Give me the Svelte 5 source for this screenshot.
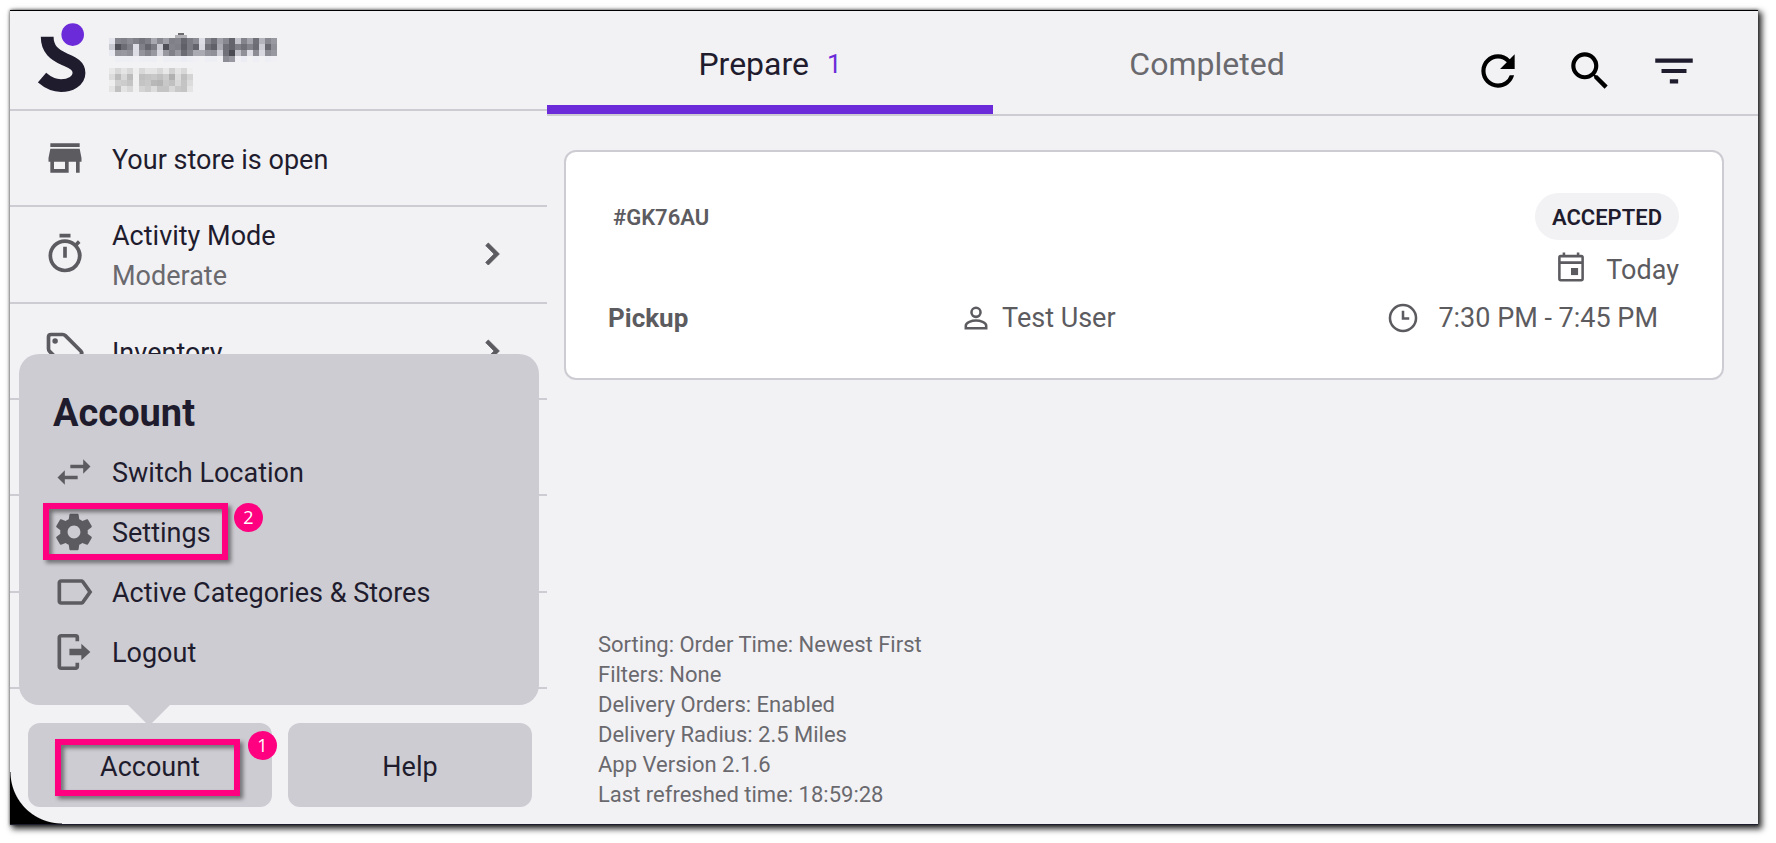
<script>
  const paths = {
    store: 'M20 4H4v2h16V4zm1 10v-2l-1-5H4l-1 5v2h1v6h10v-6h4v6h2v-6h1zm-9 4H6v-4h6v4z',
    timer:
      'M15 1H9v2h6V1zm-4 13h2V8h-2v6zm8.03-6.61l1.42-1.42c-.43-.51-.9-.99-1.41-1.41l-1.42 1.42A8.962 8.962 0 0 0 12 4c-4.97 0-9 4.03-9 9s4.02 9 9 9a8.994 8.994 0 0 0 7.03-14.61zM12 20c-3.87 0-7-3.13-7-7s3.13-7 7-7 7 3.13 7 7-3.13 7-7 7z',
    chevron: 'M10 6L8.59 7.41 13.17 12l-4.58 4.59L10 18l6-6z',
    swap: 'M6.99 11L3 15l3.99 4v-3H14v-2H6.99v-3zM21 9l-3.99-4v3H10v2h7.01v3L21 9z',
    gear: 'M19.43 12.98c.04-.32.07-.64.07-.98s-.03-.66-.07-.98l2.11-1.65c.19-.15.24-.42.12-.64l-2-3.46c-.12-.22-.39-.3-.61-.22l-2.49 1c-.52-.4-1.08-.73-1.69-.98l-.38-2.65A.488.488 0 0 0 14 2h-4c-.25 0-.46.18-.49.42l-.38 2.65c-.61.25-1.17.59-1.69.98l-2.49-1c-.23-.09-.49 0-.61.22l-2 3.46c-.13.22-.07.49.12.64l2.11 1.65c-.04.32-.07.65-.07.98s.03.66.07.98l-2.11 1.65c-.19.15-.24.42-.12.64l2 3.46c.12.22.39.3.61.22l2.49-1c.52.4 1.08.73 1.69.98l.38 2.65c.03.24.24.42.49.42h4c.25 0 .46-.18.49-.42l.38-2.65c.61-.25 1.17-.59 1.69-.98l2.49 1c.23.09.49 0 .61-.22l2-3.46c.12-.22.07-.49-.12-.64l-2.11-1.65zM12 15.5c-1.93 0-3.5-1.57-3.5-3.5s1.57-3.5 3.5-3.5 3.5 1.57 3.5 3.5-1.57 3.5-3.5 3.5z',
    label:
      'M17.63 5.84C17.27 5.33 16.67 5 16 5L5 5.01C3.9 5.01 3 5.9 3 7v10c0 1.1.9 1.99 2 1.99L16 19c.67 0 1.27-.33 1.63-.84L22 12l-4.37-6.16zM16 17H5V7h11l3.55 5L16 17z',
    logout:
      'M5 2.2h8c1 0 1.8.7 1.8 1.7v2.3h-2V4.1H5v15.8h7.8v-2.1h2v2.3c0 1-.8 1.7-1.8 1.7H5c-1.1 0-2-.8-2-1.8V4c0-1 .9-1.8 2-1.8zM9.5 10.2H16V7.5l4.9 4.5-4.9 4.5v-2.7H9.5z',
    refresh:
      'M17.65 6.35A7.958 7.958 0 0 0 12 4c-4.42 0-7.99 3.58-7.99 8s3.57 8 7.99 8c3.73 0 6.84-2.55 7.73-6h-2.08A5.99 5.99 0 0 1 12 18c-3.31 0-6-2.69-6-6s2.69-6 6-6c1.66 0 3.14.69 4.22 1.78L13 11h7V4l-2.35 2.35z',
    search:
      'M15.5 14h-.79l-.28-.27A6.471 6.471 0 0 0 16 9.5 6.5 6.5 0 1 0 9.5 16c1.61 0 3.09-.59 4.23-1.57l.27.28v.79l5 4.99L20.49 19l-4.99-5zm-6 0C7.01 14 5 11.99 5 9.5S7.01 5 9.5 5 14 7.01 14 9.5 11.99 14 9.5 14z',
    filter: 'M10 18h4v-2h-4v2zM3 6v2h18V6H3zm3 7h12v-2H6v2z'
  };

  const menuItems = [
    { icon: 'swap', text: 'Switch Location' },
    { icon: 'gear', text: 'Settings', step: 2 },
    { icon: 'label', text: 'Active Categories & Stores' },
    { icon: 'logout', text: 'Logout' }
  ];

  const info = [
    'Sorting: Order Time: Newest First',
    'Filters: None',
    'Delivery Orders: Enabled',
    'Delivery Radius: 2.5 Miles',
    'App Version 2.1.6',
    'Last refreshed time: 18:59:28'
  ];

  // Redacted store name and code: one hex grey level per 6px cell, by row.
  const mosaic = [
    { y: 5, row: 'e4 85 80 8c 80 74 80 a8 88 a0 80 84 66 7c 8c dd 88 70 a0 88 64 c4 84 a4 70 b4 88 98' },
    { y: 11, row: 'c8 50 6c 80 dd 80 66 7c cc 50 84 80 60 7c 64 d8 70 60 aa 70 64 80 70 84 6c cc 68 90' },
    { y: 17, row: 'e8 94 98 90 dd 94 84 98 d8 98 80 98 6c 84 aa aa 94 90 cc 70 4a c0 90 dd 8c d8 8c 98' },
    { y: 23, row: 'f2 ee ee ee f0 ee ee ee f2 ee ee ee ec ee f0 f2 ee ee f2 8c 98 f0 ec f2 ee f2 ee f0' },
    { y: 35, row: 'e8 d8 e4 d8 ee d8 e4 e4 d8 e8 d0 e4 d8 f0' },
    { y: 41, row: 'dc bc d8 bc f0 c0 c4 c8 c0 cc b0 dc c0 d4' },
    { y: 47, row: 'ee d0 cc c4 f0 c4 c8 b8 b4 c8 c0 d8 c4 dc' },
    { y: 53, row: 'e4 c0 e4 d8 f0 d4 cc dc c4 c4 d8 c8 c4 e4' }
  ];
  const cells = mosaic.flatMap(({ y, row }) =>
    row.split(' ').map((hex, i) => {
      const v = parseInt(hex, 16);
      const blue = y < 30 ? Math.min(v + 8, 245) : v;
      return { x: i * 6, y, fill: `rgb(${v},${v},${blue})` };
    })
  );
</script>

{#snippet icon(name, size)}
  <svg class="icon {size}" viewBox="0 0 24 24" aria-hidden="true"><path d={paths[name]} /></svg>
{/snippet}

<div class="frame">
  <div class="app">
    <aside>
      <header class="brand">
        <svg class="logo" viewBox="38 23 48 70" aria-hidden="true">
          <circle cx="72.7" cy="34.6" r="11.3" fill="#6c2bd9" />
          <path
            d="M47.2 36.8C47.2 49.5 54.5 54.5 64 59C71.5 62.5 79 65 79 73C79 81 70 85.6 61 85.6C53.5 85.6 47.5 82.3 42 77.6"
            fill="none"
            stroke="#1f1c2e"
            stroke-width="12.8"
          />
        </svg>
        <svg class="mosaic" viewBox="0 0 168 60" shape-rendering="crispEdges" aria-hidden="true">
          {#each cells as c}
            <rect x={c.x} y={c.y} width="6" height="6" fill={c.fill} />
          {/each}
          <path d="M66 2h12v3H66z" fill="#b4b4b8" />
          <path d="M69 0h6v2h-6z" fill="#6c6c70" />
        </svg>
      </header>

      <ul class="rows">
        <li>
          {@render icon('store', 'md')}
          <span class="label">Your store is open</span>
        </li>
        <li>
          {@render icon('timer', 'md')}
          <span class="label">Activity Mode<small>Moderate</small></span>
          {@render icon('chevron', 'md bold')}
        </li>
        <li>
          <svg class="icon md" viewBox="0 0 24 24" aria-hidden="true">
            <path
              class="line"
              d="M4.4 3H10.8C11.4 3 11.8 3.2 12.2 3.6L20.6 12C21.3 12.7 21.3 13.5 20.6 14.2L14.2 20.6C13.5 21.3 12.7 21.3 12 20.6L3.6 12.2C3.2 11.8 3 11.4 3 10.8V4.4C3 3.5 3.5 3 4.4 3Z"
            />
            <circle cx="6.6" cy="6.6" r="1.5" />
          </svg>
          <span class="label">Inventory</span>
          {@render icon('chevron', 'md bold')}
        </li>
        <li></li>
        <li></li>
        <li></li>
      </ul>

      <footer>
        <section class="menu">
          <h2>Account</h2>
          {#each menuItems as item}
            <button class="menu-item">
              {@render icon(item.icon, 'md')}
              {item.text}
              {#if item.step}
                <span class="mark"></span>
                <span class="step">{item.step}</span>
              {/if}
            </button>
          {/each}
        </section>
        <button class="action">
          Account
          <span class="mark"></span>
          <span class="step">1</span>
        </button>
        <button class="action">Help</button>
      </footer>
    </aside>

    <main>
      <header class="bar">
        <button class="tab active">Prepare <span class="count">1</span></button>
        <button class="tab">Completed</button>
        <div class="tools">
          <button aria-label="Refresh">{@render icon('refresh', 'lg')}</button>
          <button class="find" aria-label="Search">{@render icon('search', 'lg')}</button>
          <button class="sort" aria-label="Filter">{@render icon('filter', 'lg')}</button>
        </div>
      </header>

      <article class="card">
        <div class="top">
          <strong class="code">#GK76AU</strong>
          <strong class="status">ACCEPTED</strong>
        </div>
        <div class="day">
          <svg class="icon sm" viewBox="0 0 24 24" aria-hidden="true">
            <rect class="thin" x="3.8" y="3.6" width="16.4" height="17" rx="1" />
            <path class="thin" d="M4 8.2H20M7 1V4M17 1V4" />
            <path d="M12 12h5v5h-5z" />
          </svg>
          <span>Today</span>
        </div>
        <div class="detail">
          <strong class="kind">Pickup</strong>
          <span class="who">
            <svg class="icon sm" viewBox="0 0 24 24" aria-hidden="true">
              <circle class="thin" cx="12" cy="8" r="3.2" />
              <path class="thin" d="M4.8 19.2V17.4C4.8 15 9.2 13.8 12 13.8S19.2 15 19.2 17.4V19.2Z" />
            </svg>
            Test User
          </span>
          <span class="when">
            <svg class="icon sm" viewBox="0 0 24 24" aria-hidden="true">
              <circle class="thin" cx="12" cy="12" r="9.2" />
              <path class="thin" d="M12 6.8V12.4H16.4" />
            </svg>
            7:30 PM - 7:45 PM
          </span>
        </div>
      </article>

      <div class="info">
        {#each info as line}
          <p>{line}</p>
        {/each}
      </div>
    </main>
  </div>
</div>

<style>
  :global(body) {
    background: #fff;
  }

  .frame,
  .frame * {
    box-sizing: border-box;
  }

  .frame {
    display: flex;
    min-height: 100vh;
    padding: 10px 18px 18px 10px;
    color: #1f1c2e;
    font: 27px/32px Roboto, sans-serif;
  }

  .app {
    position: relative;
    z-index: 0;
    display: flex;
    flex: 1;
    border-top: 1px solid #000;
    border-bottom: 1px solid #1c1f2b;
    background: radial-gradient(circle at 52px 0, #f2f2f5 51px, #000 52px) left bottom / 52px 52px no-repeat,
      #f2f2f5;
    box-shadow: 3px 3px 6px 1px #000c, 0 0 3px #0009;
  }

  button {
    margin: 0;
    padding: 0;
    border: 0;
    background: none;
    color: inherit;
    font: inherit;
    cursor: pointer;
  }

  .icon {
    flex: none;
    fill: #5c5b60;
  }

  .bold {
    stroke: #5c5b60;
    stroke-width: 0.5;
  }

  .sm {
    width: 34px;
    height: 34px;
  }

  .md {
    width: 44px;
    height: 44px;
  }

  .lg {
    display: block;
    width: 50px;
    height: 50px;
    fill: #000;
  }

  .line,
  .thin {
    fill: none;
    stroke: #5c5b60;
    stroke-width: 2;
  }

  .thin {
    stroke-width: 1.8;
  }

  aside {
    display: flex;
    flex: 0 0 537px;
    flex-direction: column;
  }

  .brand {
    display: flex;
    gap: 23px;
    height: 100px;
    padding: 12px 28px 0;
    border-bottom: 2px solid #cdccd2;
  }

  .logo {
    width: 48px;
    height: 70px;
  }

  .mosaic {
    width: 168px;
    height: 60px;
    margin-top: 10px;
  }

  .rows {
    display: flex;
    flex: 1;
    flex-direction: column;
    margin: 0;
    padding: 0;
    list-style: none;
  }

  .rows li {
    display: flex;
    flex: 1;
    align-items: center;
    gap: 25px;
    padding: 0 33px;
    border-bottom: 2px solid #cdccd2;
  }

  .label {
    flex: 1;
    padding-top: 4px;
  }

  small {
    display: block;
    margin-top: 8px;
    color: #6a696e;
    font-size: 27px;
  }

  footer {
    position: relative;
    display: flex;
    gap: 16px;
    padding: 34px 15px 17px 18px;
  }

  .action {
    position: relative;
    flex: 1;
    height: 84px;
    padding-top: 4px;
    border-radius: 12px;
    background: #cdccd2;
  }

  .menu {
    position: absolute;
    right: 8px;
    bottom: 119px;
    left: 9px;
    padding: 38px 0 22px;
    border-radius: 20px;
    background: #cdccd2;
  }

  .menu::after {
    position: absolute;
    top: 100%;
    left: 109px;
    width: 42px;
    height: 21px;
    background: #cdccd2;
    clip-path: polygon(0 0, 100% 0, 50% 100%);
    content: '';
  }

  h2 {
    margin: 0 34px 9px;
    font-size: 38px;
    font-weight: 700;
    line-height: 42px;
  }

  .menu-item {
    position: relative;
    display: flex;
    align-items: center;
    gap: 16px;
    width: 100%;
    height: 60px;
    padding-left: 33px;
    text-align: left;
  }

  .menu-item .icon {
    margin-bottom: 2px;
  }

  .mark {
    position: absolute;
    top: 16px;
    left: 27px;
    width: 185px;
    height: 57px;
    border: 6px solid #ff0080;
    filter: drop-shadow(3px 3px 2px #0007);
  }

  .step {
    position: absolute;
    top: 8px;
    left: 220px;
    width: 29px;
    height: 29px;
    border-radius: 50%;
    background: #ff0080;
    color: #fff;
    font: 18px/29px 'Open Sans', sans-serif;
    text-align: center;
  }

  .menu-item .mark {
    top: 0;
    left: 24px;
  }

  .menu-item .step {
    top: 0;
    left: 215px;
  }

  main {
    display: flex;
    flex: 1;
    flex-direction: column;
    min-width: 0;
  }

  .bar {
    display: flex;
    height: 105px;
    border-bottom: 2px solid #cdccd2;
  }

  .tab {
    display: flex;
    flex: 0 1 428px;
    align-items: center;
    justify-content: center;
    gap: 18px;
    padding-top: 12px;
    border-bottom: 9px solid transparent;
    color: #6a696e;
    font-size: 32px;
  }

  .active {
    flex-basis: 446px;
    border-color: #6c2bd9;
    color: #1f1c2e;
  }

  .count {
    color: #6c2bd9;
    font-size: 26px;
  }

  .tools {
    display: flex;
    flex: 1;
    align-items: center;
    justify-content: flex-end;
    gap: 34px;
    padding: 16px 59px 0 0;
  }

  .find {
    margin-left: 8px;
  }

  .sort .lg {
    fill: #1f1c2e;
  }

  .card {
    margin: 34px 34px 0 17px;
    padding: 41px 43px 42px 42px;
    border: 2px solid #cdccd2;
    border-radius: 12px;
    background: #fff;
    color: #5c5b60;
  }

  .top,
  .day,
  .detail,
  .who,
  .when {
    display: flex;
    align-items: center;
  }

  .top {
    justify-content: space-between;
    padding-left: 5px;
    font-size: 22px;
  }

  .code,
  .status {
    font-weight: 600;
  }

  .code {
    padding-top: 2px;
  }

  .status {
    padding: 2px 17px 0;
    border-radius: 24px;
    background: #f2f2f5;
    color: #1f1c2e;
    line-height: 45px;
  }

  .kind {
    font-size: 26px;
  }

  .day {
    justify-content: flex-end;
    gap: 18px;
    height: 60px;
  }

  .day .icon {
    margin-bottom: 4px;
  }

  .detail {
    justify-content: space-between;
    height: 36px;
    padding-right: 21px;
  }

  .who {
    gap: 9px;
  }

  .when {
    gap: 18px;
  }

  .info {
    margin-top: auto;
    padding: 0 51px 14px;
    color: #6a696e;
    font-size: 22px;
    line-height: 30px;
  }

  p {
    margin: 0;
  }
</style>
